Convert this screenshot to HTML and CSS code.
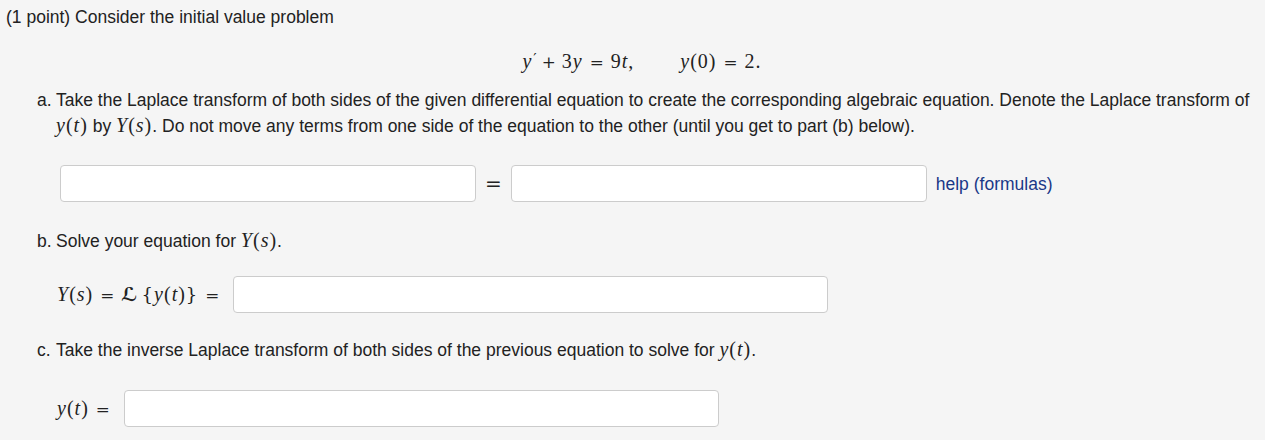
FILE: index.html
```html
<!DOCTYPE html>
<html>
<head>
<meta charset="utf-8">
<link rel="stylesheet" href="styles.css">
</head>
<body>
<div class="problem">
  <p class="title">(1 point) Consider the initial value problem</p>
  <div class="display"><span class="math"><span class="i">y</span><span class="prime">′</span><span class="bin">+</span>3<span class="i">y</span><span class="rel">=</span>9<span class="i">t</span>,</span><span class="math second"><span class="i">y</span>(0)<span class="rel">=</span>2.</span></div>
  <ol class="parts">
    <li class="part">
      <span class="marker">a.</span>
      <div class="part-body">
        <p>Take the Laplace transform of both sides of the given differential equation to create the corresponding algebraic equation. Denote the Laplace transform of <span class="math"><span class="i">y</span>(<span class="i">t</span>)</span> by <span class="math"><span class="i">Y</span>(<span class="i">s</span>)</span>. Do not move any terms from one side of the equation to the other (until you get to part (b) below).</p>
        <div class="row row-a">
          <input class="ans short first" type="text">
          <span class="math"><span class="rel solo">=</span></span>
          <input class="ans short" type="text">
          <a class="help" href="#">help (formulas)</a>
        </div>
      </div>
    </li>
    <li class="part">
      <span class="marker">b.</span>
      <div class="part-body">
        <p>Solve your equation for <span class="math"><span class="i">Y</span>(<span class="i">s</span>)</span>.</p>
        <div class="row row-b">
          <span class="math label"><span class="i">Y</span>(<span class="i">s</span>)<span class="rel">=</span><span class="cal">ℒ</span><span class="brace">{</span><span class="i">y</span>(<span class="i">t</span>)<span class="brace">}</span><span class="rel">=</span></span>
          <input class="ans long" type="text">
        </div>
      </div>
    </li>
    <li class="part part-c">
      <span class="marker">c.</span>
      <div class="part-body">
        <p>Take the inverse Laplace transform of both sides of the previous equation to solve for <span class="math"><span class="i">y</span>(<span class="i">t</span>)</span>.</p>
        <div class="row row-c">
          <span class="math label"><span class="i">y</span>(<span class="i">t</span>)<span class="rel">=</span></span>
          <input class="ans long" type="text">
        </div>
      </div>
    </li>
  </ol>
</div>
</body>
</html>
```

FILE: styles.css
```css
html, body {
  margin: 0;
  padding: 0;
  background: #f5f5f5;
}

body {
  font-family: "Liberation Sans", Arial, sans-serif;
  font-size: 17.5px;
  line-height: 26px;
  color: #222;
}

.problem {
  padding: 4px 0 0 5px;
}

p {
  margin: 0;
}

.title {
  padding-left: 1px;
}

.math {
  font-family: "Liberation Serif", "DejaVu Serif", serif;
  font-size: 20px;
  letter-spacing: 1px;
}

p .math {
  line-height: 1;
}

.math .i {
  font-style: italic;
}

.math .bin,
.math .rel {
  font-family: "DejaVu Serif", serif;
  font-size: 0.84em;
  letter-spacing: 0;
}

.math .bin {
  margin: 0 6px;
}

.math .rel {
  margin: 0 7px;
}

.math .rel.solo {
  margin: 0;
  font-size: 1em;
}

.math .prime {
  font-family: "DejaVu Serif", serif;
  font-size: 0.75em;
  margin-left: 1px;
  margin-right: -2px;
  position: relative;
  top: -0.25em;
}

.math .cal {
  font-family: "DejaVu Sans", sans-serif;
  font-weight: bold;
  font-size: 0.95em;
  margin-right: 3px;
}

.math .brace {
  font-family: "DejaVu Serif", serif;
  font-size: 0.9em;
}

.display {
  margin-top: 18px;
  text-align: center;
  padding-left: 14px;
}

.display .second {
  margin-left: 46px;
}

.parts {
  list-style: none;
  margin: 11px 0 0 0;
  padding: 0;
}

.part {
  display: flex;
  margin-top: 26px;
}

.part:first-child {
  margin-top: 0;
}

.part.part-c {
  margin-top: 24px;
}

.marker {
  width: 19px;
  flex: none;
  margin-left: 32px;
}

.part-body {
  flex: 1;
  min-width: 0;
}

.row {
  display: flex;
  align-items: center;
  gap: 9px;
}

.row-a {
  margin-top: 26px;
}

.row-b {
  margin-top: 22px;
  gap: 7px;
}

.row-c {
  margin-top: 27px;
  gap: 7px;
}

.row .label {
  padding-left: 1px;
}

.ans {
  box-sizing: border-box;
  height: 37px;
  background: #fff;
  border: 1px solid #cccccc;
  border-radius: 4px;
  margin: 0;
  padding: 4px 6px;
  font: inherit;
}

.ans.short {
  width: 416px;
}

.ans.first {
  margin-left: 4px;
}

.ans.long {
  width: 595px;
}

.help {
  color: #1a3888;
  text-decoration: none;
}
```
